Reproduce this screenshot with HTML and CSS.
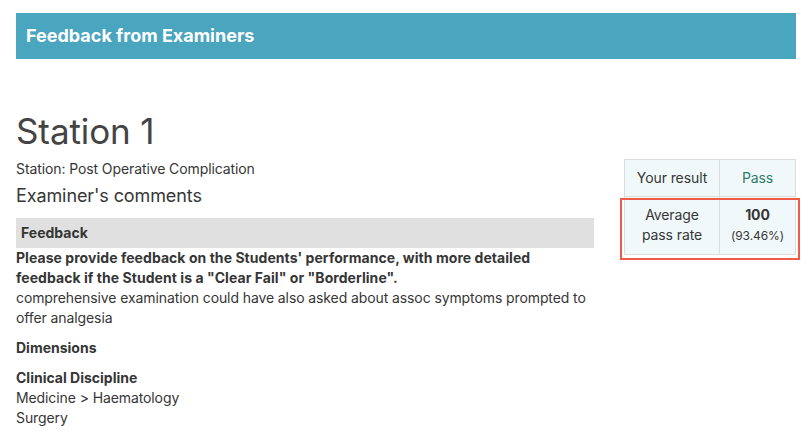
FILE: index.html
```html
<!DOCTYPE html>
<html lang="en">
<head>
<meta charset="utf-8">
<title>Feedback from Examiners</title>
<link rel="stylesheet" href="styles.css">
</head>
<body>
<div class="page">
  <header class="banner">Feedback from Examiners</header>
  <div class="content">
    <main class="main">
      <h1 class="station-title">Station 1</h1>
      <p class="station-name">Station: Post Operative Complication</p>
      <h2 class="comments-title">Examiner's comments</h2>
      <div class="section-bar">Feedback</div>
      <p class="question">Please provide feedback on the Students' performance, with more detailed feedback if the Student is a "Clear Fail" or "Borderline".</p>
      <p class="answer">comprehensive examination could have also asked about assoc symptoms prompted to offer analgesia</p>
      <p class="label dims">Dimensions</p>
      <div class="discipline">
        <p class="label">Clinical Discipline</p>
        <p class="value">Medicine &gt; Haematology</p>
        <p class="value">Surgery</p>
      </div>
    </main>
    <aside class="side">
      <div class="result-table">
        <div class="row">
          <div class="cell">Your result</div>
          <div class="cell pass">Pass</div>
        </div>
        <div class="row highlighted">
          <div class="cell">Average<br>pass rate</div>
          <div class="cell"><strong class="score">100</strong><span class="pct">(93.46%)</span></div>
        </div>
      </div>
    </aside>
  </div>
</div>
</body>
</html>
```
FILE: styles.css
```css
* { box-sizing: border-box; }
html, body { margin: 0; padding: 0; background: #fff; }
body {
  font-family: "Inter", "Liberation Sans", sans-serif;
  color: #363636;
  font-size: 14px;
  line-height: 20px;
  letter-spacing: -0.1px;
}
.page { padding: 13px 12px 0 16px; }
.banner {
  background: #4aa5bf;
  color: #fff;
  font-weight: 700;
  font-size: 18px;
  height: 46px;
  display: flex;
  align-items: center;
  padding-left: 10px;
  letter-spacing: 0;
}
.content {
  display: flex;
  gap: 30px;
  margin-top: 50px;
}
.main { width: 578px; }
.station-title {
  font-size: 35px;
  font-weight: 400;
  line-height: 44px;
  margin: 0 0 6px;
  color: #444;
}
p { margin: 0; }
.station-name { font-size: 14px; }
.comments-title {
  font-size: 18px;
  font-weight: 400;
  margin: 5px 0 10px;
  line-height: 24px;
}
.section-bar {
  background: #e0e0e0;
  font-weight: 700;
  padding: 5px 5px;
  line-height: 20px;
  letter-spacing: 0;
}
.question { font-weight: 700; letter-spacing: 0.05px; }
.dims { margin-top: 10px; }
.discipline { margin-top: 10px; }
.label { font-weight: 700; letter-spacing: 0; }
.side { padding-top: 50px; }
.result-table {
  width: 172px;
  border: 1px solid #ddd;
  background: #f1f8fa;
}
.row { display: flex; position: relative; }
.row + .row { border-top: 1px solid #ddd; }
.cell {
  flex: 0 0 94px;
  text-align: center;
  padding: 8px 4px;
  font-size: 14px;
  line-height: 20px;
}
.cell + .cell { flex: 1; border-left: 1px solid #ddd; }
.pass { color: #2e7d6a; }
.highlighted::after {
  content: "";
  position: absolute;
  top: 1px;
  left: -5px;
  right: -5px;
  bottom: -6px;
  border: 2px solid #f05a4a;
  pointer-events: none;
}
.score { display: block; font-weight: 700; }
.pct { font-size: 12px; }
```
